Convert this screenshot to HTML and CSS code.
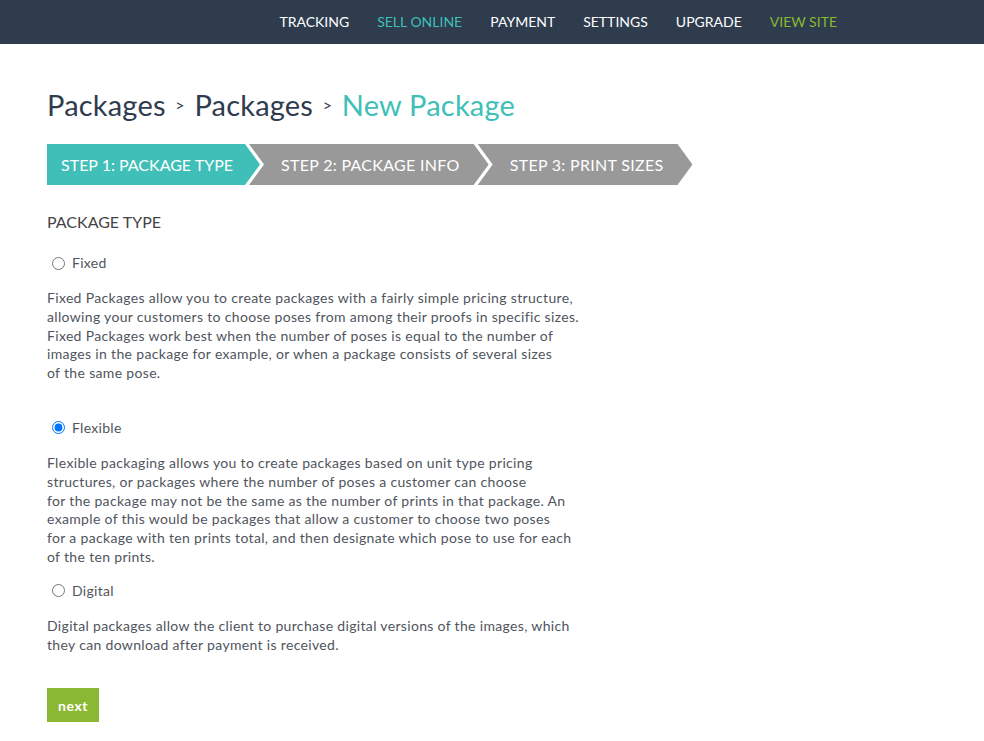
FILE: index.html
```html
<!DOCTYPE html>
<html lang="en">
<head>
  <meta charset="UTF-8">
  <meta name="viewport" content="width=device-width, initial-scale=1.0">
  <title>New Package</title>
  <link rel="stylesheet" href="styles.css">
</head>
<body>

<nav class="topbar">
  <a href="#">TRACKING</a>
  <a href="#" class="teal">SELL ONLINE</a>
  <a href="#">PAYMENT</a>
  <a href="#">SETTINGS</a>
  <a href="#">UPGRADE</a>
  <a href="#" class="green">VIEW SITE</a>
</nav>

<div class="main">
  <h1 class="crumbs">
    Packages <span class="sep">&gt;</span> Packages <span class="sep">&gt;</span> <span class="current">New Package</span>
  </h1>

  <div class="steps">
    <div class="step first active">STEP 1: PACKAGE TYPE</div>
    <div class="step">STEP 2: PACKAGE INFO</div>
    <div class="step">STEP 3: PRINT SIZES</div>
  </div>

  <h3 class="section">PACKAGE TYPE</h3>

  <label class="option"><input type="radio" name="type" value="fixed"> Fixed</label>
  <p class="desc spaced">
    Fixed Packages allow you to create packages with a fairly simple pricing structure,<br>
    allowing your customers to choose poses from among their proofs in specific sizes.<br>
    Fixed Packages work best when the number of poses is equal to the number of<br>
    images in the package for example, or when a package consists of several sizes<br>
    of the same pose.
  </p>

  <label class="option"><input type="radio" name="type" value="flexible" checked> Flexible</label>
  <p class="desc">
    Flexible packaging allows you to create packages based on unit type pricing<br>
    structures, or packages where the number of poses a customer can choose<br>
    for the package may not be the same as the number of prints in that package. An<br>
    example of this would be packages that allow a customer to choose two poses<br>
    for a package with ten prints total, and then designate which pose to use for each<br>
    of the ten prints.
  </p>

  <label class="option"><input type="radio" name="type" value="digital"> Digital</label>
  <p class="desc">
    Digital packages allow the client to purchase digital versions of the images, which<br>
    they can download after payment is received.
  </p>

  <button class="next">next</button>
</div>

</body>
</html>
```

FILE: styles.css
```css
body {
  margin: 0;
  font-family: Lato, "Open Sans", sans-serif;
  color: #50555d;
  background: #fff;
}
.topbar {
  display: flex;
  justify-content: flex-end;
  align-items: center;
  gap: 28px;
  height: 44px;
  padding-right: 147px;
  background-color: #2e3c4e;
}
.topbar a {
  color: #fff;
  font-size: 14px;
  line-height: 42px;
  text-decoration: none;
}
.topbar a.teal {
  color: #3fbfb7;
}
.topbar a.green {
  color: #8ab833;
}
.main {
  padding: 0 47px;
}
.crumbs {
  margin: 44px 0 0;
  font-size: 29px;
  font-weight: normal;
  line-height: 34px;
  letter-spacing: 0.2px;
  color: #2e3c4e;
}
.crumbs .sep {
  font-size: 16px;
  vertical-align: 5px;
  padding: 0 2px;
}
.crumbs .current {
  color: #3fbfb7;
}
.steps {
  display: flex;
  margin-top: 22px;
  height: 41px;
}
.step {
  display: flex;
  align-items: center;
  padding: 0 29px 0 32px;
  margin-left: -11px;
  background-color: #999;
  color: #fff;
  font-size: 16px;
  letter-spacing: 0.3px;
  clip-path: polygon(0 0, calc(100% - 15px) 0, 100% 50%, calc(100% - 15px) 100%, 0 100%, 15px 50%);
}
.step.first {
  margin-left: 0;
  padding-left: 14px;
  padding-right: 27px;
  letter-spacing: 0;
  clip-path: polygon(0 0, calc(100% - 15px) 0, 100% 50%, calc(100% - 15px) 100%, 0 100%);
}
.step.active {
  background-color: #40bfb8;
}
.section {
  margin: 27px 0 0;
  font-size: 16px;
  font-weight: normal;
  line-height: 20px;
  color: #444;
}
.option {
  display: flex;
  align-items: center;
  margin-top: 22px;
  font-size: 14px;
  line-height: 18px;
  letter-spacing: 0.3px;
}
.option input {
  margin: 0 7px 0 5px;
}
.desc {
  margin: 17px 0 0;
  font-size: 14px;
  line-height: 18.8px;
  letter-spacing: 0.33px;
}
.desc + .option {
  margin-top: 15px;
}
.desc.spaced + .option {
  margin-top: 36px;
}
.next {
  margin-top: 34px;
  padding: 0 11px;
  height: 34px;
  border: none;
  background-color: #8ab833;
  color: #fff;
  font-family: Lato, sans-serif;
  font-size: 14px;
  font-weight: bold;
  letter-spacing: 0.6px;
  cursor: pointer;
}
```
